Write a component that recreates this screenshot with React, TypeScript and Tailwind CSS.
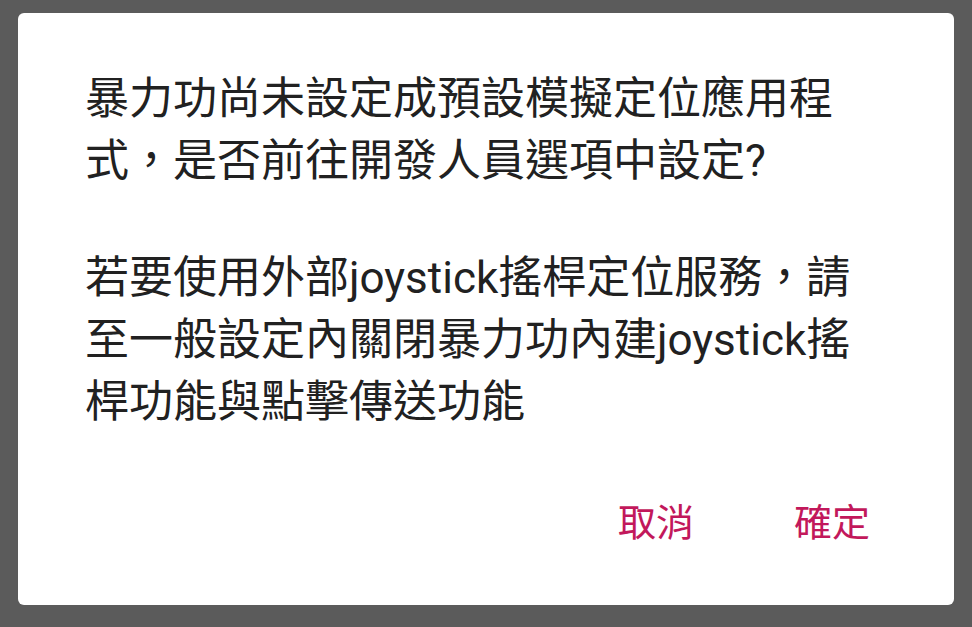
export default function App() {
  return (
    <div
      className="w-[972px] h-[627px] bg-[#5b5b5b] pt-[13px] pl-[18px]"
      style={{ fontFamily: 'Roboto, "Noto Sans CJK TC", sans-serif' }}
    >
      <div className="w-[936px] h-[592px] bg-white rounded-[6px] flex flex-col">
        <div className="pt-[55px] px-[67px] text-[44px] leading-[62px] text-[#212121]">
          <p>暴力功尚未設定成預設模擬定位應用程式，是否前往開發人員選項中設定?</p>
          <p className="mt-[55px]">
            若要使用外部joystick搖桿定位服務，請至一般設定內關閉暴力功內建joystick搖桿功能與點擊傳送功能
          </p>
        </div>
        <div className="mt-auto mb-[60px] flex justify-end pr-[84px] gap-[100px] text-[38px] leading-[44px] text-[#c2185b]">
          <span>取消</span>
          <span>確定</span>
        </div>
      </div>
    </div>
  );
}
